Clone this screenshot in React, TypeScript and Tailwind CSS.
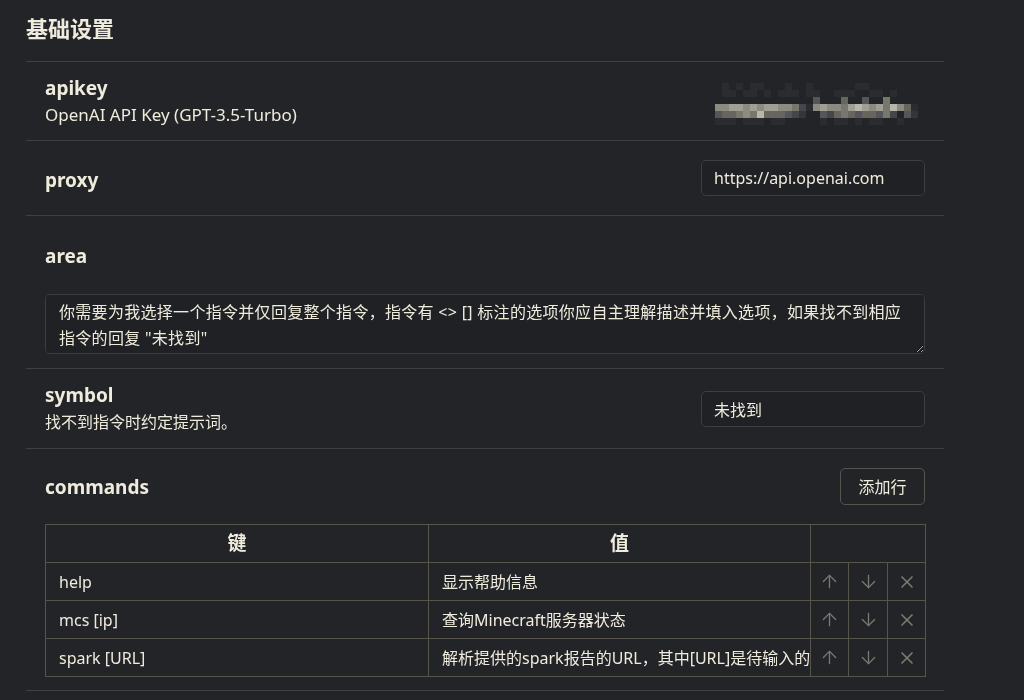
import { ArrowDown, ArrowUp, X } from "lucide-react"

const font = { fontFamily: '"Noto Sans", "Noto Sans CJK SC", sans-serif' }

type Command = { key: string; value: string }

const commands: Command[] = [
  { key: "help", value: "显示帮助信息" },
  { key: "mcs [ip]", value: "查询Minecraft服务器状态" },
  { key: "spark [URL]", value: "解析提供的spark报告的URL，其中[URL]是待输入的URL" },
]

// pixelated (mosaic) api key, one digit per 7px block
const mosaicRows = [
  "010101100010" + "01" + "000000110000000" + "0",
  "011011010111" + "01" + "100111001101000" + "0",
  "000000000000" + "00" + "400050040060000" + "0",
  "778878788776" + "31" + "787768987869751" + "0",
  "455676955543" + "20" + "043565455463042" + "0",
  "111011101100" + "00" + "010110101100100" + "0",
]
const shades = ["", "#2b2c30", "#34353a", "#45464a", "#56565a", "#66665f", "#78776e", "#8c8b82", "#a09f94", "#b8b6aa"]

function ApiKeyMask() {
  return (
    <svg width="217" height="42" viewBox="0 0 217 42" className="block">
      {mosaicRows.map((row, r) =>
        row.split("").map((d, c) =>
          d === "0" ? null : <rect key={`${r}-${c}`} x={c * 7} y={r * 7} width={7} height={7} fill={shades[Number(d)]} />
        )
      )}
    </svg>
  )
}

function TextInput({ value }: { value: string }) {
  return (
    <input
      readOnly
      value={value}
      style={font}
      className="w-[224px] h-9 px-[12px] rounded-[5px] border border-[#3d3e42] bg-[#202125] text-[16px] text-[#efecdd] outline-none"
    />
  )
}

export default function App() {
  return (
    <div className="min-h-[700px] bg-[#232428] text-[#efecdd] pl-[26px]" style={font}>
      <h1 className="pt-3 h-11 leading-8 text-[22px] font-bold mb-[17px]">基础设置</h1>

      <div className="w-[918px]">
        {/* apikey */}
        <div className="flex items-center justify-between pl-[19px] pr-[12px] py-[12px] border-t border-b border-[#3f4044]">
          <div>
            <div className="text-[19px] font-bold leading-[28px]">apikey</div>
            <div className="text-[17px] leading-[26px]">OpenAI API Key (GPT-3.5-Turbo)</div>
          </div>
          <div className="pt-[6px]">
            <ApiKeyMask />
          </div>
        </div>

        {/* proxy */}
        <div className="flex items-center justify-between px-[19px] py-[19px] border-b border-[#3f4044]">
          <div className="text-[19px] font-bold leading-[28px] pt-[3px]">proxy</div>
          <TextInput value="https://api.openai.com" />
        </div>

        {/* area */}
        <div className="px-[19px] pt-[22px] pb-[14px] border-b border-[#3f4044]">
          <div className="text-[19px] font-bold leading-9">area</div>
          <textarea
            readOnly
            style={font}
            className="mt-[20px] block w-full h-[60px] pl-[13px] pr-[18px] py-[4px] rounded-[5px] border border-[#3d3e42] bg-[#202125] text-[16px] leading-[26px] tracking-[0.3px] text-[#efecdd] outline-none"
            value={'你需要为我选择一个指令并仅回复整个指令，指令有 <> [] 标注的选项你应自主理解描述并填入选项，如果找不到相应指令的回复 "未找到"'}
          />
        </div>

        {/* symbol */}
        <div className="flex items-center justify-between px-[19px] py-[12px] border-b border-[#3f4044]">
          <div>
            <div className="text-[19px] font-bold leading-[28px]">symbol</div>
            <div className="text-[16px] leading-[27px]">找不到指令时约定提示词。</div>
          </div>
          <TextInput value="未找到" />
        </div>

        {/* commands */}
        <div className="px-[19px] pt-[19px] pb-[13px] border-b border-[#3f4044]">
          <div className="flex items-center justify-between">
            <div className="text-[19px] font-bold leading-[28px]">commands</div>
            <button className="w-[85px] h-[37px] rounded-[5px] border border-[#55554f] text-[16px]">添加行</button>
          </div>

          <table className="mt-[19px] w-[880px] table-fixed border-collapse text-[16px]">
            <colgroup>
              <col className="w-[383px]" />
              <col className="w-[382px]" />
              <col className="w-[38px]" />
              <col className="w-[39px]" />
              <col className="w-[38px]" />
            </colgroup>
            <thead>
              <tr className="h-[38px]">
                <th className="border border-[#57554b] font-bold text-[19px]">键</th>
                <th className="border border-[#57554b] font-bold text-[19px]">值</th>
                <th colSpan={3} className="border border-[#57554b]"></th>
              </tr>
            </thead>
            <tbody>
              {commands.map((c) => (
                <tr key={c.key} className="h-[38px]">
                  <td className="border border-[#57554b] px-[13px] whitespace-nowrap overflow-hidden">{c.key}</td>
                  <td className="border border-[#57554b] pl-[13px] pr-[6px] whitespace-nowrap overflow-hidden">
                    {c.value}
                  </td>
                  <td className="border border-[#57554b]">
                    <ArrowUp className="mx-auto text-[#7b7a72]" size={21} strokeWidth={1.5} />
                  </td>
                  <td className="border border-[#57554b]">
                    <ArrowDown className="mx-auto text-[#7b7a72]" size={21} strokeWidth={1.5} />
                  </td>
                  <td className="border border-[#57554b]">
                    <X className="mx-auto text-[#7b7a72]" size={20} strokeWidth={2} />
                  </td>
                </tr>
              ))}
            </tbody>
          </table>
        </div>
      </div>
    </div>
  )
}
